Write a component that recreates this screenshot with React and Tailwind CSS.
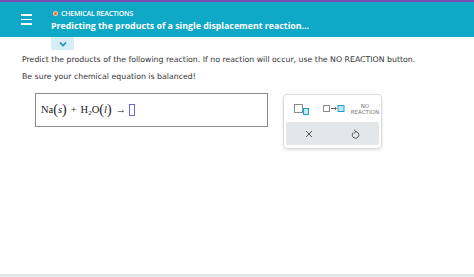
import React from "react";

function SubscriptIcon() {
  return (
    <svg width="16" height="12" viewBox="0 0 16 12">
      <rect x="0.5" y="0.5" width="8" height="8" fill="none" stroke="#8a8a8a" strokeWidth="1" />
      <rect x="9.5" y="4.5" width="5" height="6" fill="#bfe8f5" stroke="#1aa3d0" strokeWidth="1" />
    </svg>
  );
}

function ArrowIcon() {
  return (
    <svg width="22" height="10" viewBox="0 0 22 10">
      <rect x="0.5" y="1.5" width="6" height="6" fill="none" stroke="#8a8a8a" strokeWidth="1" />
      <path d="M8 4.5 H13" stroke="#555" strokeWidth="1" />
      <path d="M12 3 L14 4.5 L12 6 Z" fill="#555" />
      <rect x="15" y="1.5" width="6" height="6" fill="#bfe8f5" stroke="#1aa3d0" strokeWidth="1" />
    </svg>
  );
}

export default function App() {
  return (
    <div className="w-[474px] h-[277px] bg-white flex flex-col overflow-hidden" style={{ fontFamily: "'DejaVu Sans', Verdana, sans-serif" }}>
      <div className="h-[2px] bg-[#7a4bb0]" />
      <div className="h-[35px] bg-[#0fa8c6] flex items-center">
        <div className="w-[51px] flex justify-center pl-[1px]">
          <div className="flex flex-col gap-[3px]">
            <div className="w-[11px] h-[1.5px] bg-white" />
            <div className="w-[11px] h-[1.5px] bg-white" />
            <div className="w-[11px] h-[1.5px] bg-white" />
          </div>
        </div>
        <div className="flex flex-col text-white" style={{ fontFamily: "'Open Sans', sans-serif" }}>
          <div className="flex items-center gap-[3px] ml-[2px] h-[12px]">
            <div className="w-[5px] h-[5px] rounded-full bg-[#f06a2c] border border-white/60" />
            <span className="text-[7px] font-semibold tracking-tight leading-none">CHEMICAL REACTIONS</span>
          </div>
          <div className="text-[8.8px] font-bold leading-[12px]">Predicting the products of a single displacement reaction...</div>
        </div>
      </div>
      <div className="ml-[51px] w-[23px] h-[13px] bg-[#d5edf4] rounded-b-[2px] flex items-center justify-center">
        <svg width="8" height="6" viewBox="0 0 8 6">
          <path d="M1 1.5 L4 4.5 L7 1.5" fill="none" stroke="#1590b5" strokeWidth="1.6" />
        </svg>
      </div>
      <div className="pl-[22px] text-[#333] text-[7.8px] leading-[12px]">
        <p className="mt-[4px]">Predict the products of the following reaction. If no reaction will occur, use the NO REACTION button.</p>
        <p className="mt-[5px]">Be sure your chemical equation is balanced!</p>
      </div>
      <div className="flex items-start mt-[10px]">
        <div className="ml-[35px] w-[233px] h-[34px] border border-[#8c8c8c] flex items-center pl-[5px] text-[#222]" style={{ fontFamily: "'Liberation Serif', serif" }}>
          <span className="text-[10.5px] flex items-center">
            Na<span className="text-[14px] leading-none font-light">(</span><i>s</i><span className="text-[14px] leading-none font-light">)</span>
            <span className="mx-[4px]">+</span>
            H<sub className="text-[7px] relative top-[3px]">2</sub>O<span className="text-[14px] leading-none font-light">(</span><i>l</i><span className="text-[14px] leading-none font-light">)</span>
            <span className="ml-[4px] mr-[3px]">→</span>
            <span className="inline-block w-[6px] h-[12px] border border-[#6c63d8]" />
          </span>
        </div>
        <div className="ml-[15px] mt-[1px] w-[99px] h-[55px] border border-[#dcdcdc] rounded-[4px] shadow-[0_1px_3px_rgba(0,0,0,0.12)] flex flex-col px-[2px] pb-[3px]">
          <div className="flex items-center h-[27px]">
            <div className="w-[32px] flex justify-center pt-[2px]"><SubscriptIcon /></div>
            <div className="w-[34px] flex justify-center"><ArrowIcon /></div>
            <div className="flex-1 text-center text-[5.5px] leading-[6px] text-[#777]">NO<br />REACTION</div>
          </div>
          <div className="flex-1 bg-[#e4e7e9] rounded-[2px] flex items-center text-[#555]">
            <div className="flex-1 flex justify-center">
              <svg width="8" height="8" viewBox="0 0 8 8">
                <path d="M1 1 L7 7 M7 1 L1 7" stroke="#555" strokeWidth="1" />
              </svg>
            </div>
            <div className="flex-1 flex justify-center">
              <svg width="9" height="10" viewBox="0 0 9 10">
                <path d="M2.2 3.6 A3.3 3.3 0 1 0 4.5 2.6" fill="none" stroke="#555" strokeWidth="1" />
                <path d="M3 0.8 L5 2.6 L3 4.3" fill="none" stroke="#555" strokeWidth="1" />
              </svg>
            </div>
          </div>
        </div>
      </div>
      <div className="flex-1" />
      <div className="h-[3px] bg-[#dfe7ea]" />
    </div>
  );
}
